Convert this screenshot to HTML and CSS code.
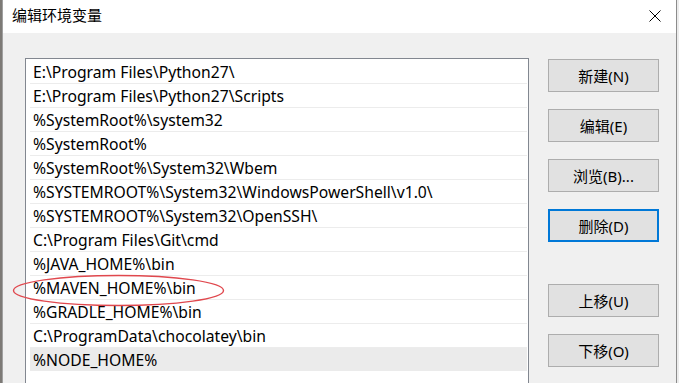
FILE: index.html
```html
<!DOCTYPE html>
<html lang="zh-CN">
<head>
  <meta charset="UTF-8">
  <title>编辑环境变量</title>
  <link rel="stylesheet" href="styles.css">
</head>
<body>
  <div class="frame">
    <div class="edge-left"></div>
    <div class="window">
      <div class="titlebar">
        <span class="title">编辑环境变量</span>
        <svg class="close" width="12" height="12" viewBox="0 0 12 12">
          <path d="M0.5 0.5 L11.5 11.5 M11.5 0.5 L0.5 11.5" stroke="#000" stroke-width="1" fill="none"/>
        </svg>
      </div>
      <div class="content">
        <div class="list">
          <div class="row">E:\Program Files\Python27\</div>
          <div class="row">E:\Program Files\Python27\Scripts</div>
          <div class="row">%SystemRoot%\system32</div>
          <div class="row">%SystemRoot%</div>
          <div class="row">%SystemRoot%\System32\Wbem</div>
          <div class="row">%SYSTEMROOT%\System32\WindowsPowerShell\v1.0\</div>
          <div class="row">%SYSTEMROOT%\System32\OpenSSH\</div>
          <div class="row">C:\Program Files\Git\cmd</div>
          <div class="row">%JAVA_HOME%\bin</div>
          <div class="row">%MAVEN_HOME%\bin</div>
          <div class="row">%GRADLE_HOME%\bin</div>
          <div class="row">C:\ProgramData\chocolatey\bin</div>
          <div class="row selected">%NODE_HOME%</div>
        </div>
        <div class="buttons">
          <div class="group">
            <button class="btn">新建(N)</button>
            <button class="btn">编辑(E)</button>
            <button class="btn">浏览(B)...</button>
            <button class="btn focused">删除(D)</button>
          </div>
          <div class="group">
            <button class="btn">上移(U)</button>
            <button class="btn">下移(O)</button>
          </div>
        </div>
        <!-- red mark drawn around the maven entry -->
        <svg class="mark" width="213" height="33" viewBox="0 0 213 33">
          <ellipse cx="106.5" cy="16.5" rx="105" ry="15" stroke="#e0484e" stroke-width="1.4" fill="none"/>
        </svg>
      </div>
    </div>
    <div class="edge-right"></div>
  </div>
</body>
</html>
```

FILE: styles.css
```css
body {
  margin: 0;
  padding: 0;
  font-family: "Noto Sans", "Noto Sans CJK SC", sans-serif;
  overflow: hidden;
}

.frame {
  display: flex;
  width: 679px;
  height: 383px;
}

.edge-left {
  width: 2px;
  background: #7d7a76;
}

.edge-right {
  width: 2px;
  background: #ececec;
  border-left: 1px solid #8c8c8c;
}

.window {
  flex: 1;
  display: flex;
  flex-direction: column;
  border-left: 1px solid #a0a0a0;
  background: #f0f0f0;
}

.titlebar {
  height: 33px;
  background: #fff;
  display: flex;
  align-items: center;
  justify-content: space-between;
  padding: 0 15px 4px 9px;
  box-sizing: border-box;
}

.title {
  font-size: 15px;
  color: #000;
}

.close {
  display: block;
  margin-top: 2px;
}

.content {
  flex: 1;
  position: relative;
  display: flex;
  padding: 25px 0 0 22px;
  overflow: hidden;
}

.list {
  width: 502px;
  border: 1px solid #828790;
  border-bottom: none;
  background: #fff;
  padding-top: 1px;
}

.row {
  height: 23px;
  border-bottom: 1px solid #ececec;
  margin-left: 4px;
  margin-right: 1px;
  padding-left: 3px;
  font-size: 15.7px;
  line-height: 25px;
  color: #000;
  white-space: nowrap;
  overflow: hidden;
}

.row.selected {
  background: #ebebeb;
  border-bottom-color: #fff;
}

.buttons {
  margin-left: 19px;
  padding-top: 1px;
  display: flex;
  flex-direction: column;
  gap: 42px;
}

.group {
  display: flex;
  flex-direction: column;
  gap: 17px;
}

.btn {
  width: 111px;
  height: 33px;
  background: #e1e1e1;
  border: 1px solid #adadad;
  font-family: "Noto Sans", "Noto Sans CJK SC", sans-serif;
  font-size: 15px;
  color: #000;
  padding: 0;
}

.btn.focused {
  border: 2px solid #0078d7;
}

.mark {
  position: absolute;
  left: 9px;
  top: 241px;
}
```
